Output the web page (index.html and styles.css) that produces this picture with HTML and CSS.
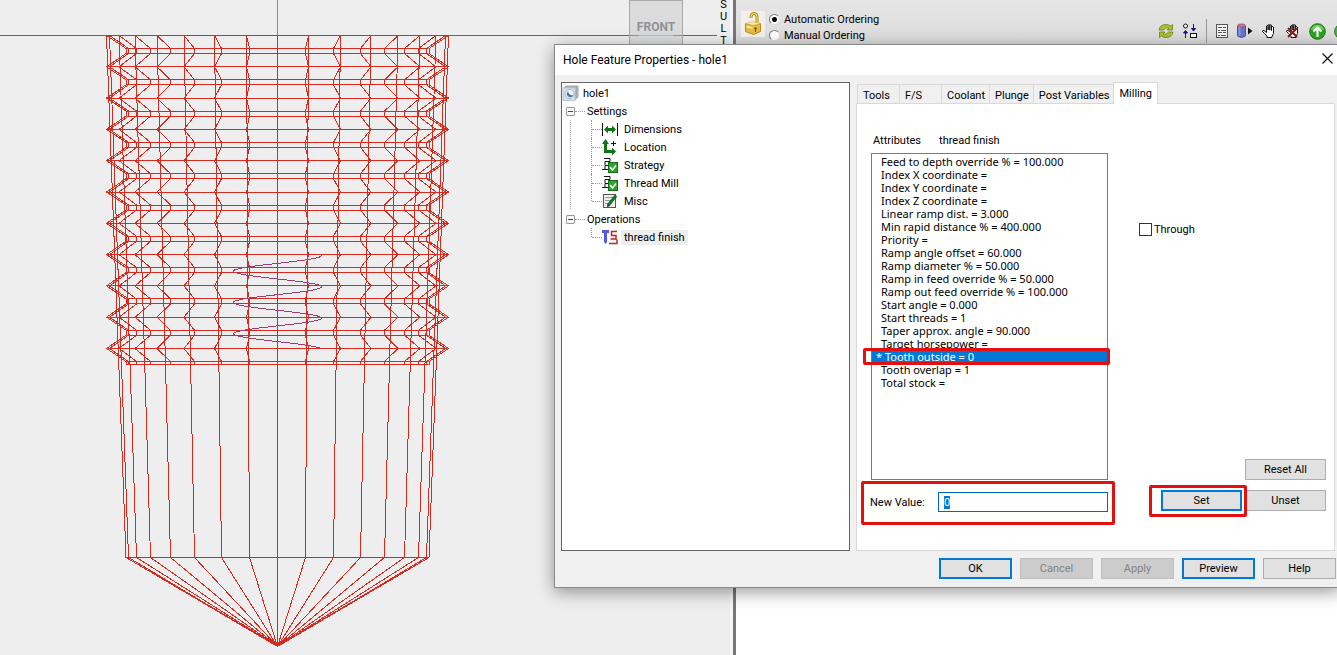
FILE: index.html
```
<!DOCTYPE html>
<html lang="en">
<head>
  <meta charset="utf-8">
  <title>Hole Feature Properties - hole1</title>
  <link rel="stylesheet" href="styles.css">
</head>
<body>
  <div class="app">
    <div class="viewport">
      <svg class="scene" id="scene"></svg>
      <div class="cube"><span>FRONT</span></div>
    </div>
    <div class="results">S<br>U<br>L<br>T</div>
    <div class="side">
      <div class="toolbar">
        <svg class="lock" width="24" height="26" viewBox="0 0 24 26">
          <rect width="24" height="26" fill="#f1f0ec"/>
          <path d="M16 13V5.500Q15.500 2.500 13 2.500T10 5.500V7" fill="none" stroke="#b58a1c" stroke-width="3"/>
          <path d="M16 13V5.500Q15.500 2.500 13 2.500T10 5.500V7" fill="none" stroke="#f3d769" stroke-width="1.200"/>
          <path d="M4.500 12.500l8 2 7-2v8l-7 3-8-3z" fill="#e6bb3c" stroke="#b58a1c"/>
          <path d="M4.500 12.500l7-2 8 2-7 2z" fill="#fae9a0" stroke="#cfa43a" stroke-width=".5"/>
          <path d="M5.500 14.500l6 1.500v2l-6-1.500z" fill="#fbeb9f"/>
          <circle cx="14.500" cy="17.500" r="1.200" fill="#6e5614"/><path d="M14 18h1v3h-1z" fill="#6e5614"/>
        </svg>
        <div class="ordering">
          <label><input type="radio" name="ordering" checked>Automatic Ordering</label>
          <label><input type="radio" name="ordering">Manual Ordering</label>
        </div>
        <div class="tools">
          <button type="button" aria-label="Refresh">
            <svg width="16" height="16" viewBox="0 0 16 16">
              <g fill="#a9c22a" stroke="#6d8012" stroke-width=".8">
                <path d="M1 7q1-5.500 7-5.500 3 0 4.500 1.500L14.500 1.500V7H9l2-2Q8 3.500 5.500 7z"/>
                <path d="M15 9q-1 5.500-7 5.500-3 0-4.500-1.500L1.500 14.500V9H7l-2 2q3 1.500 5.500-2z"/>
              </g>
            </svg>
          </button>
          <button type="button" aria-label="Reorder">
            <svg width="16" height="16" viewBox="0 0 16 16">
              <circle cx="3.500" cy="3" r="2" fill="#fff" stroke="#111"/>
              <path d="M3.500 15V8M1.500 10l2-2.500 2 2.500zM11.500 1v6M9.500 5.500l2 2.500 2-2.500z" stroke="#12128c" fill="#12128c"/>
              <rect x="8.500" y="10.500" width="6" height="4" fill="#fff" stroke="#111"/>
            </svg>
          </button>
          <i class="sep"></i>
          <button type="button" aria-label="Operation list">
            <svg width="14" height="16" viewBox="0 0 14 16">
              <rect x="1.500" y="1.500" width="11" height="13" fill="#f4f4f4" stroke="#555"/>
              <path d="M3 4.500h4m1 0h3M3 7.500h2m1 0h5M3 9.500h4m1 0h3M3 12.500h2m1 0h5" stroke="#555"/>
            </svg>
          </button>
          <button type="button" aria-label="Stock">
            <svg width="16" height="16" viewBox="0 0 16 16">
              <path d="M.5 3v10q4 3 8 0V3z" fill="#6475cb" stroke="#4655a4"/>
              <path d="M1.500 4h2v9h-2z" fill="#8b98e0"/>
              <ellipse cx="4.500" cy="2.500" rx="4" ry="1.500" fill="#cc7b96" stroke="#985a79"/>
              <path d="M11 4.500v7L15.500 8z" fill="#111"/>
            </svg>
          </button>
          <button type="button" aria-label="Pan">
            <svg width="16" height="16" viewBox="0 0 16 16">
              <path class="hand" d="M6 14.500v-1.500L3.500 10.500 1.500 8.500q0-1.500 1.500-1L5.500 9.500V3q.8-1 1.600 0V7V2q.8-1 1.700 0V7V2.200q.9-1 1.700 0V7.500V4q.9-1 2 0v6.500l-1.500 3v1z"/>
            </svg>
          </button>
          <button type="button" aria-label="Stop pan">
            <svg width="16" height="16" viewBox="0 0 16 16">
              <path class="hand" d="M6 14.500v-1.500L3.500 10.500 1.500 8.500q0-1.500 1.500-1L5.500 9.500V3q.8-1 1.600 0V7V2q.8-1 1.700 0V7V2.200q.9-1 1.700 0V7.500V4q.9-1 2 0v6.500l-1.500 3v1z"/>
              <path d="M3 5l9 9M12 5l-9 9" stroke="#991010" stroke-width="2"/>
            </svg>
          </button>
          <button type="button" aria-label="Up">
            <svg width="17" height="17" viewBox="0 0 17 17">
              <circle cx="8.500" cy="8.500" r="7.800" fill="#2ba51c" stroke="#167a10"/>
              <path d="M2 7q1-5 6.500-5T15 7q-6-2-13 0z" fill="#71cb61"/>
              <path d="M8.500 14V4.500M4.500 8.500l4-4 4 4" fill="none" stroke="#fff" stroke-width="2.200"/>
            </svg>
          </button>
          <button type="button" aria-label="Down">
            <svg width="17" height="17" viewBox="0 0 17 17"><circle cx="8.500" cy="8.500" r="7.800" fill="#49b43b" stroke="#167a10"/></svg>
          </button>
        </div>
      </div>
    </div>
  </div>

  <div class="dialog" role="dialog" aria-label="Hole Feature Properties">
    <div class="titlebar">
      <span>Hole Feature Properties - hole1</span>
      <button type="button" aria-label="Close">
        <svg width="11" height="11" viewBox="0 0 11 11"><path d="M.5.5l10 10m0-10l-10 10" stroke="#111" stroke-width="1.200"/></svg>
      </button>
    </div>

    <div class="content">
      <ul class="tree">
        <li class="root">
          <svg width="17" height="16" viewBox="0 0 17 16">
            <path d="M1 3l3-2.500h12.500V12L13 15.500H1z" fill="#a5adb5"/>
            <path d="M1 3h12v12.500H1z" fill="#dde1e5" stroke="#c0c6cc"/>
            <circle cx="7.500" cy="9" r="4.500" fill="#f6fafd" stroke="#8fb3d0"/>
            <path d="M6 6q-3 4 1 6 3 1 4-2-4 1-5-4z" fill="#3776ae"/>
          </svg>
          <span>hole1</span>
        </li>
        <li class="group"><i class="box"></i><i class="dash"></i><span>Settings</span></li>
        <li class="leaf"><i class="dash"></i>
          <svg width="16" height="16" viewBox="0 0 16 16"><path d="M.5 2v13M15.500 2v13" stroke="#111"/><path d="M2 8.500l4-4V7h4V4.500l4 4-4 4V10H6v2.500z" fill="#0f7515"/></svg>
          <span>Dimensions</span></li>
        <li class="leaf"><i class="dash"></i>
          <svg width="16" height="16" viewBox="0 0 16 16"><path d="M5 5v6h5V8.500l4 4-4 4V14H2V5H0l3.500-5L7 5z" fill="#0f7515"/><path d="M11.500 2v5M9 4.500h5" stroke="#111"/></svg>
          <span>Location</span></li>
        <li class="leaf"><i class="dash"></i>
          <svg width="16" height="16" viewBox="0 0 16 16"><path class="steps" d="M2 1.500h6v3H3v4h5M0 12.500h6M3 9v3"/><rect x="6.500" y="5.500" width="9" height="10" fill="#27a62a" stroke="#126b17"/><path d="M8 10l2.500 3L14 8.500" fill="none" stroke="#fff" stroke-width="1.500"/></svg>
          <span>Strategy</span></li>
        <li class="leaf"><i class="dash"></i>
          <svg width="16" height="16" viewBox="0 0 16 16"><path class="steps" d="M2 1.500h6v3H3v4h5M0 12.500h6M3 9v3"/><rect x="6.500" y="5.500" width="9" height="10" fill="#27a62a" stroke="#126b17"/><path d="M8 10l2.500 3L14 8.500" fill="none" stroke="#fff" stroke-width="1.500"/></svg>
          <span>Thread Mill</span></li>
        <li class="leaf last"><i class="dash"></i>
          <svg width="16" height="16" viewBox="0 0 16 16"><rect x="1.500" y="1.500" width="12" height="13" fill="#eee" stroke="#555"/><path d="M3 4.500h8M3 7.500h6M3 10.500h3" stroke="#999"/><path d="M14 2.500L6.500 12" stroke="#15741f" stroke-width="3"/><path d="M5 14l.5-3.500L8 13z" fill="#222"/></svg>
          <span>Misc</span></li>
        <li class="group"><i class="box"></i><i class="dash"></i><span>Operations</span></li>
        <li class="leaf last noline"><i class="dash"></i>
          <svg width="16" height="16" viewBox="0 0 16 16"><path d="M0 1h7v3H5v9l-1.500 2L2 13V4H0z" fill="#5858df"/><path d="M15 2.500H9.500v4H14v3.500H8.500M15 10.500v4H7" fill="none" stroke="#c52222" stroke-width="1.500"/></svg>
          <span class="current">thread finish</span></li>
      </ul>

      <div class="tabs">
        <div class="tablist" role="tablist">
          <button type="button" role="tab" class="tab">Tools</button>
          <button type="button" role="tab" class="tab">F/S</button>
          <button type="button" role="tab" class="tab">Coolant</button>
          <button type="button" role="tab" class="tab">Plunge</button>
          <button type="button" role="tab" class="tab">Post Variables</button>
          <button type="button" role="tab" class="tab active" aria-selected="true">Milling</button>
        </div>
        <div class="page">
          <div class="left">
            <div class="heading"><label for="attrs">Attributes</label><span>thread finish</span></div>
            <div class="listwrap">
              <select id="attrs" size="18">
                <option>Feed to depth override % = 100.000</option>
                <option>Index X coordinate =</option>
                <option>Index Y coordinate =</option>
                <option>Index Z coordinate =</option>
                <option>Linear ramp dist. = 3.000</option>
                <option>Min rapid distance % = 400.000</option>
                <option>Priority =</option>
                <option>Ramp angle offset = 60.000</option>
                <option>Ramp diameter % = 50.000</option>
                <option>Ramp in feed override % = 50.000</option>
                <option>Ramp out feed override % = 100.000</option>
                <option>Start angle = 0.000</option>
                <option>Start threads = 1</option>
                <option>Taper approx. angle = 90.000</option>
                <option>Target horsepower =</option>
                <option class="changed" selected>* Tooth outside = 0</option>
                <option>Tooth overlap = 1</option>
                <option>Total stock =</option>
              </select>
              <div class="mark mark-row"></div>
            </div>
            <div class="newvalue">
              <label for="newvalue">New Value:</label>
              <input type="text" id="newvalue" value="0">
            </div>
          </div>
          <div class="right">
            <label class="through"><input type="checkbox">Through</label>
            <div class="actions">
              <button type="button" class="btn reset">Reset All</button>
              <div class="setwrap">
                <button type="button" class="btn primary">Set</button>
                <div class="mark mark-set"></div>
              </div>
              <button type="button" class="btn">Unset</button>
            </div>
          </div>
        </div>
      </div>
    </div>

    <div class="footer">
      <button type="button" class="btn primary">OK</button>
      <button type="button" class="btn" disabled>Cancel</button>
      <button type="button" class="btn" disabled>Apply</button>
      <button type="button" class="btn primary">Preview</button>
      <button type="button" class="btn">Help</button>
    </div>
  </div>

  <script src="scene.js"></script>
</body>
</html>
```
FILE: scene.js
```
// Wireframe of the threaded hole, seen from the front
const scene = document.getElementById('scene');
const cx = 277.5;
const top0 = 35.5;
const pitch = 31.3;
const threads = 10;
const bottom = 557.5;
const tip = 646.5;

// half widths of the lines round the crest and the root of the thread
const crest = [0, 31, 63, 93.5, 120.5, 142.5, 158.5, 168, 171];
const root = [0, 28, 56, 83, 107, 127, 141, 149, 151.5];

function add(d, cls) {
  const path = document.createElementNS('http://www.w3.org/2000/svg', 'path');
  path.setAttribute('d', d);
  path.setAttribute('class', cls);
  scene.appendChild(path);
}

// keep the level lines on whole pixel rows
function row(y) {
  return Math.floor(y) + 0.5;
}

add(`M0 ${top0}H2000`, 'axis-x');
add(`M${cx} 0V${top0}`, 'axis-z');

for (let i = 0; i <= threads; i++) {
  const y = top0 + i * pitch;
  add(`M${cx - 170} ${row(y)}H${cx + 170}`, 'wire');
  add(`M${cx - 151} ${row(y + 13)}H${cx + 151}`, 'wire');
  add(`M${cx - 151} ${row(y + (i === threads ? 16 : 18))}H${cx + 151}`, 'wire');
}
add(`M${cx - 151} ${bottom}H${cx + 151}`, 'wire');
add(`M${cx} ${top0}V${tip}`, 'wire');

for (let k = 1; k < crest.length; k++) {
  [-1, 1].forEach(side => {
    const c = cx + side * crest[k];
    const r = cx + side * root[k];
    add(`M${c} ${top0}L${r} ${bottom}L${cx} ${tip}`, 'wire slant');
    let zigzag = `M${c} ${top0}`;
    for (let i = 0; i <= threads; i++) {
      const y = top0 + i * pitch;
      zigzag += `L${c} ${y}L${r} ${y + 13}V${y + (i === threads ? 16 : 18)}`;
    }
    add(zigzag, 'wire slant');
  });
}

// tool path: three turns, from the top right down
let helix = '';
for (let a = 0; a <= 6 * Math.PI; a += 0.1) {
  const x = cx + 44 * Math.cos(a);
  const y = 255.5 + a / (2 * Math.PI) * pitch;
  helix += `${helix ? 'L' : 'M'}${x.toFixed(1)} ${y.toFixed(1)}`;
}
add(helix, 'toolpath slant');

document.getElementById('newvalue').select();
```
FILE: styles.css
```
* {
  box-sizing: border-box;
}
body {
  margin: 0;
  height: 100vh;
  overflow: hidden;
  position: relative;
  background: #fff;
  color: #000;
  font-family: Roboto, "Noto Sans", sans-serif;
  font-size: 11px;
}
button, input, select {
  font: inherit;
  color: inherit;
}
button {
  padding: 0;
  border: 0;
  background: none;
}
label {
  white-space: nowrap;
}
.app {
  display: flex;
  height: 100%;
}

/* graphics view */
.viewport {
  position: relative;
  flex: 0 0 717px;
  background: #eee;
}
.scene {
  display: block;
  width: 100%;
  height: 100%;
}
.scene path {
  fill: none;
  stroke-width: 1px;
}
.slant {
  shape-rendering: crispEdges;
}
.wire { stroke: #d62a1e; }
.axis-x { stroke: #1f77c8; }
.axis-z { stroke: #33cc33; }
.toolpath { stroke: #a23a78; }
.cube {
  position: absolute;
  top: 0;
  left: 629px;
  width: 54px;
  height: 48px;
  border: 1px solid #aaa;
  background: rgba(200, 200, 200, 0.5);
  padding: 10px 9px 0;
}
.cube span {
  display: flex;
  justify-content: center;
  height: 36px;
  line-height: 33px;
  background: rgba(215, 218, 222, 0.6);
  color: #929292;
  font-size: 12px;
  font-weight: bold;
}
.results {
  flex: 0 0 16px;
  margin-top: -1px;
  border-right: 3px solid #f6f6f6;
  background: #eee;
  font-size: 11px;
  line-height: 12px;
  text-align: center;
}

/* right pane */
.side {
  flex: 1;
  min-width: 0;
  border-left: 3px solid #777;
  background: #fff;
}
.toolbar {
  display: flex;
  height: 48px;
  padding-left: 5px;
  background: linear-gradient(#e6e6e6, #dadada);
}
.lock {
  margin-top: 11px;
}
.ordering {
  display: flex;
  flex-direction: column;
  padding: 11px 0 0 4px;
}
.ordering label {
  display: flex;
  align-items: center;
  gap: 4px;
  height: 16px;
}
.ordering input {
  appearance: none;
  width: 11px;
  height: 11px;
  margin: 0;
  border: 1px solid #777;
  border-right-color: #ddd;
  border-bottom-color: #ddd;
  border-radius: 50%;
  background: #fff;
}
.ordering input:checked {
  background: radial-gradient(circle, #000 2px, #fff 3px);
}
.tools {
  display: flex;
  align-items: center;
  gap: 8px;
  margin-left: auto;
  margin-right: -14px;
  padding-top: 14px;
}
.tools button, .tools svg {
  display: block;
}
.sep {
  width: 1px;
  height: 24px;
  background: #999;
}
.hand {
  fill: #fff;
  stroke: #111;
}

/* dialog window */
.dialog {
  position: absolute;
  top: 44px;
  left: 554px;
  right: -4px;
  border: 1px solid #888;
  background: #f0f0f0;
  box-shadow: 0 4px 16px rgba(0, 0, 0, 0.4);
}
.titlebar {
  display: flex;
  align-items: center;
  justify-content: space-between;
  height: 30px;
  padding: 0 7px 0 8px;
  background: #fff;
  font-size: 12px;
}
.content {
  display: flex;
  gap: 6px;
  padding: 7px 5px 0 6px;
}
.tree {
  flex: 0 0 289px;
  height: 469px;
  margin: 0;
  padding: 1px 0;
  border: 1px solid #666;
  background: #fff;
  list-style: none;
}
.tree li {
  display: flex;
  align-items: center;
  height: 18px;
}
.root {
  gap: 4px;
}
.group {
  padding-left: 4px;
}
.box {
  width: 9px;
  height: 9px;
  border: 1px solid #999;
  border-radius: 1px;
  background: linear-gradient(#446, #446) center / 5px 1px no-repeat #f8f8f8;
}
.dash {
  width: 10px;
  border-top: 1px dotted #999;
}
.group .dash {
  margin-right: 2px;
}
.leaf {
  background: linear-gradient(#aaa 50%, transparent 50%) 8px 0 / 1px 2px repeat-y;
}
.leaf.noline {
  background: none;
}
.leaf::before {
  content: "";
  align-self: stretch;
  width: 29px;
  border-right: 1px dotted #999;
}
.leaf.last::before {
  height: 9px;
  align-self: flex-start;
}
.leaf svg {
  margin-right: 6px;
}
.leaf .current {
  margin-left: -3px;
  padding: 1px 3px;
  background: #eee;
}
.steps {
  fill: none;
  stroke: #111;
}

/* tabs */
.tabs {
  flex: 1;
  min-width: 0;
  display: flex;
  flex-direction: column;
}
.tablist {
  display: flex;
  align-items: flex-end;
  height: 21px;
  padding-left: 1px;
}
.tab {
  min-width: 42px;
  height: 19px;
  padding: 2px 4px 0 5px;
  border: 1px solid #d9d9d9;
  border-width: 1px 0 0 1px;
  text-align: left;
  white-space: nowrap;
}
.tab.active {
  height: 22px;
  margin-bottom: -1px;
  padding: 0 5px;
  border-right-width: 1px;
  background: #fff;
  z-index: 1;
}
.page {
  flex: 1;
  display: flex;
  padding: 0 8px 0 4px;
  border: 1px solid #d9d9d9;
  background: #fff;
}
.left {
  flex: 0 0 254px;
  padding-top: 29px;
}
.heading {
  display: flex;
  gap: 18px;
  height: 20px;
  padding-left: 12px;
  line-height: 16px;
}
.listwrap {
  position: relative;
  margin: 0 7px 0 10px;
}
.listwrap select {
  display: block;
  width: 100%;
  height: 327px;
  margin: 0;
  padding: 0;
  border: 1px solid #7a7a7a;
  border-radius: 0;
  outline: 0;
  background: #fff;
  font-family: "Noto Sans", sans-serif;
  overflow: hidden;
}
.listwrap option {
  height: 13px;
  min-height: 13px;
  padding: 0 0 0 9px;
  line-height: 11px;
}
.listwrap option.changed {
  padding-left: 4px;
}
.listwrap option:checked {
  background: linear-gradient(#0078d7, #0078d7);
  color: #fff;
  -webkit-text-fill-color: #fff;
}
.mark {
  position: absolute;
  border: 3px solid #e60f0f;
  border-radius: 2px;
  pointer-events: none;
}
.mark-row {
  top: 195px;
  left: -8px;
  right: -2px;
  height: 17px;
}
.newvalue {
  display: flex;
  align-items: center;
  justify-content: space-between;
  height: 44px;
  margin-top: 1px;
  padding: 0 4px 2px 6px;
  border: 3px solid #e60f0f;
  border-radius: 2px;
}
.newvalue input {
  width: 170px;
  height: 20px;
  padding: 0 5px;
  border: 1px solid #0067b8;
  border-radius: 0;
  outline: 0;
}
.newvalue input::selection {
  background: #0078d7;
  color: #fff;
}
.right {
  flex: 1;
  display: flex;
  flex-direction: column;
  justify-content: space-between;
  padding: 119px 0 39px 24px;
}
.through {
  display: flex;
  align-items: center;
  gap: 2px;
}
.through input {
  appearance: none;
  width: 13px;
  height: 13px;
  margin: 0;
  border: 1px solid #333;
  background: #fff;
}
.actions {
  display: grid;
  grid-template-columns: 81px 81px;
  justify-content: end;
  gap: 10px 3px;
}
.reset {
  grid-column: 2;
}
.setwrap {
  position: relative;
  display: grid;
}
.mark-set {
  top: -5px;
  left: -12px;
  right: -5px;
  bottom: -6px;
}
.btn {
  height: 21px;
  border: 1px solid #adadad;
  background: #e1e1e1;
}
.btn.primary {
  border: 2px solid #0078d7;
}
.btn:disabled {
  background: #ccc;
  border-color: #bfbfbf;
  color: #838383;
}
.footer {
  display: flex;
  justify-content: flex-end;
  gap: 8px;
  padding: 7px 4px 8px;
}
.footer .btn {
  width: 73px;
}
```
